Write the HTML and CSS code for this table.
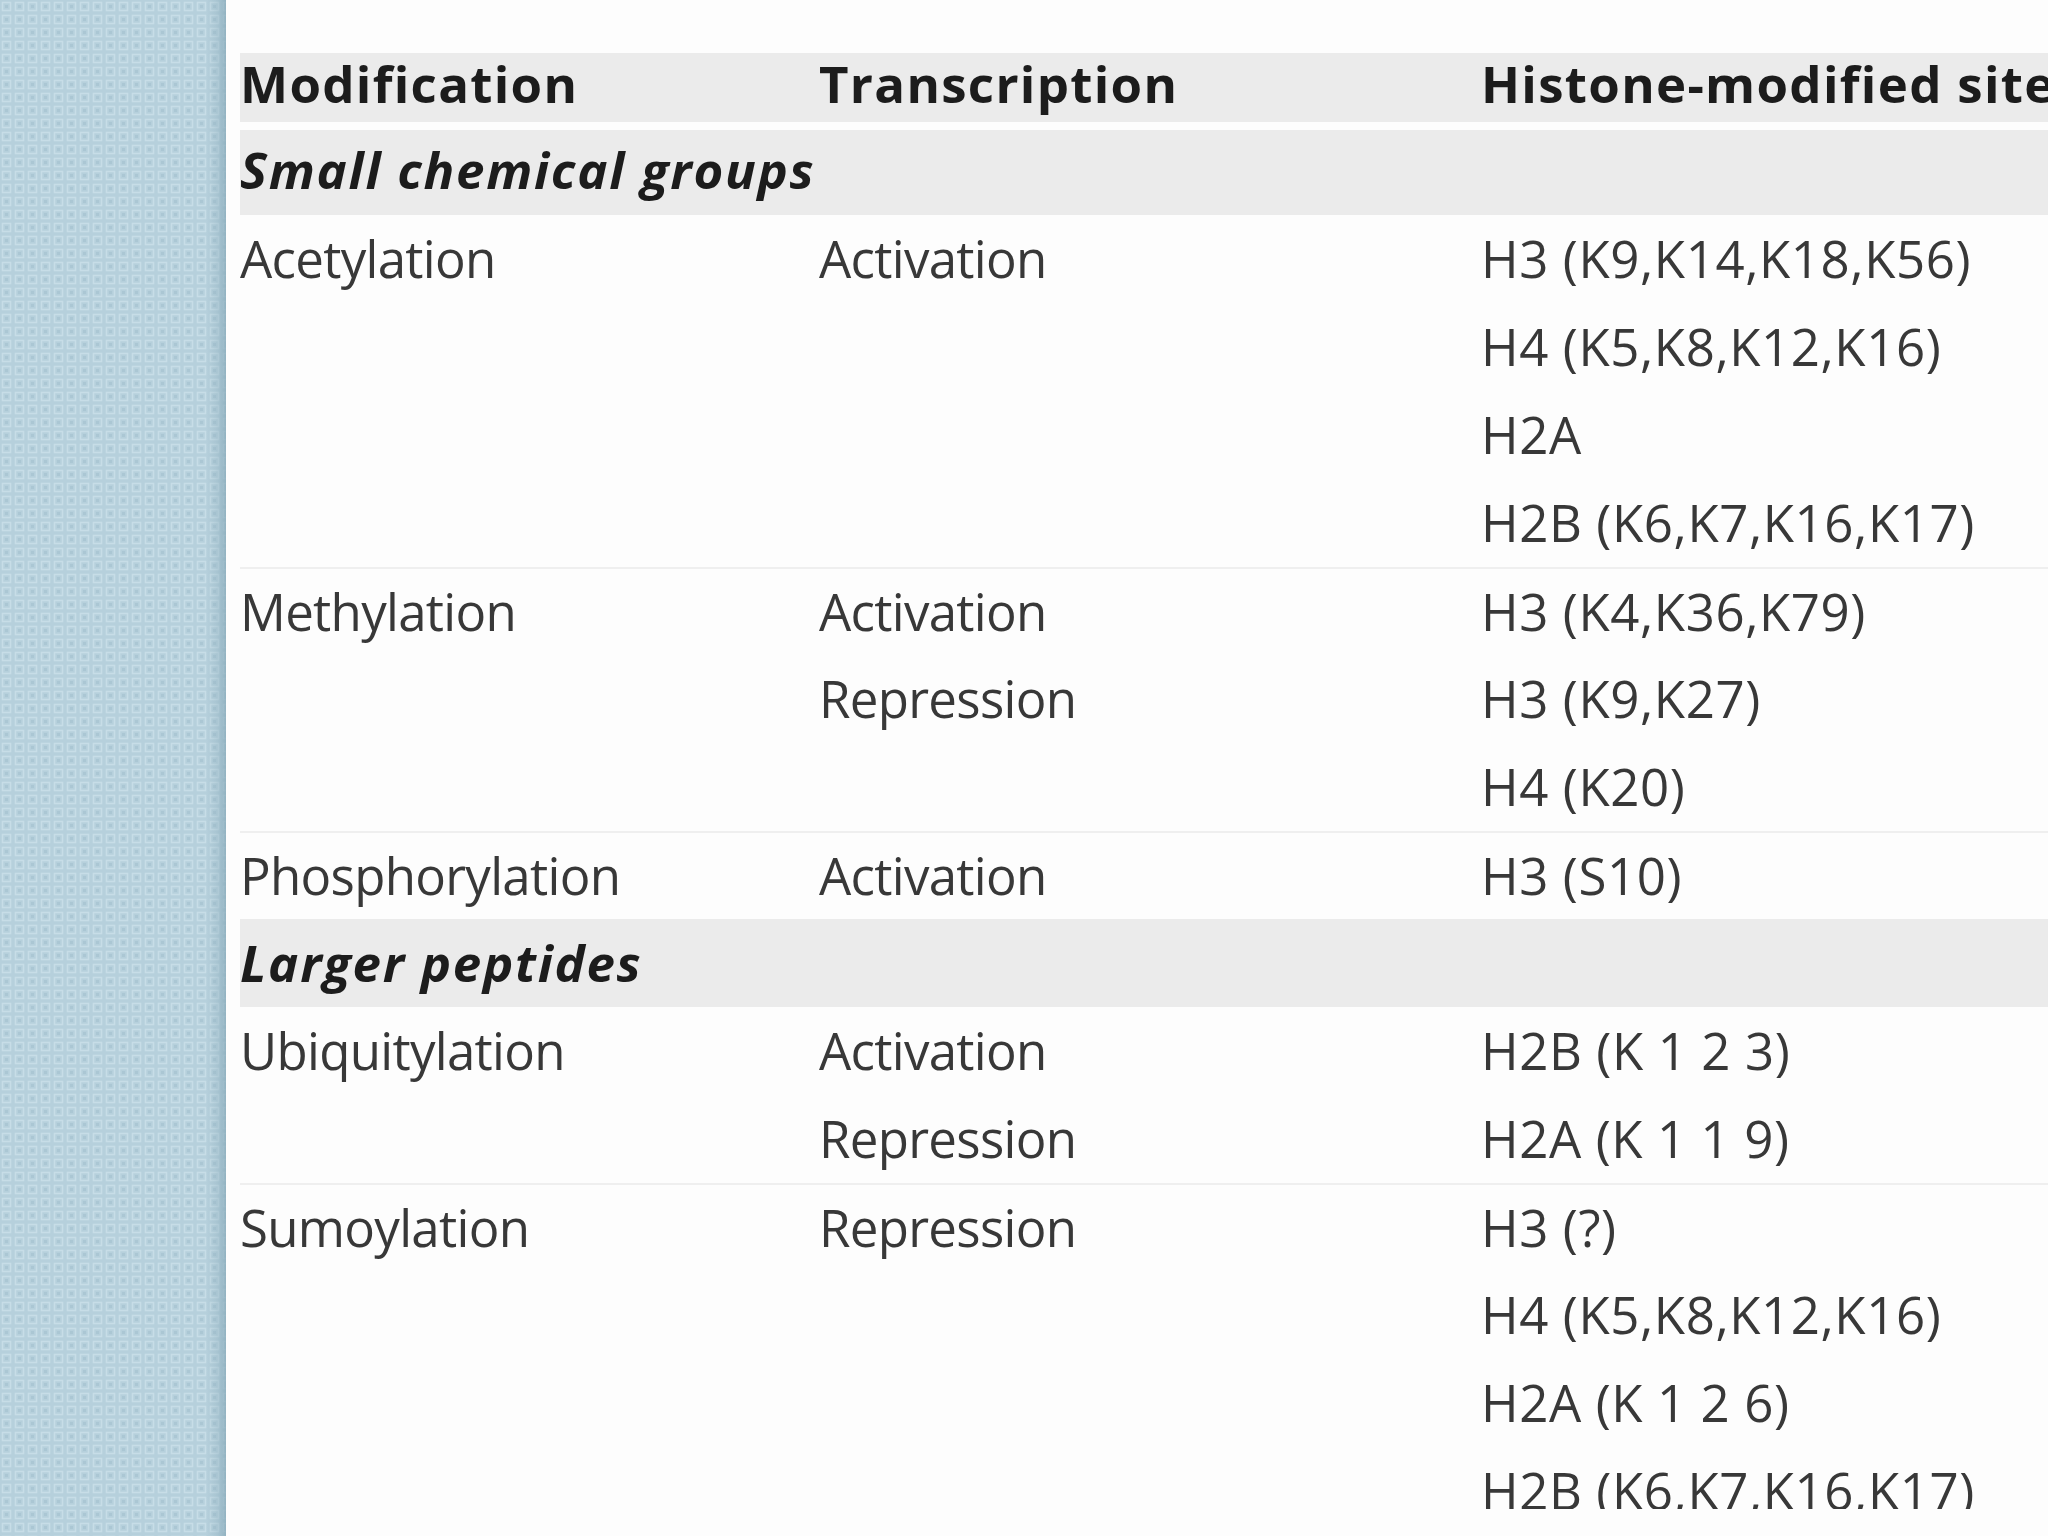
FILE: index.html
```html
<!DOCTYPE html>
<html lang="en">
<head>
<meta charset="utf-8">
<title>Histone modifications</title>
<link rel="stylesheet" href="styles.css">
</head>
<body>
<div class="page">
  <aside class="strip">
    <svg class="strip-art" width="226" height="1536" viewBox="0 0 226 1536" aria-hidden="true">
      <defs>
        <pattern id="dots" width="13" height="13" patternUnits="userSpaceOnUse">
          <rect width="13" height="13" fill="#b6d0dc"/>
          <rect x="2.5" y="2.5" width="8" height="8" fill="none" stroke="#c7dde7" stroke-width="1.6"/>
          <rect x="5" y="5" width="3" height="3" fill="#abc7d4"/>
        </pattern>
        <linearGradient id="edge" x1="0" y1="0" x2="1" y2="0">
          <stop offset="0" stop-color="#8fb0bf" stop-opacity="0"/>
          <stop offset="0.55" stop-color="#8fb0bf" stop-opacity="0.35"/>
          <stop offset="1" stop-color="#86a8b8" stop-opacity="0.75"/>
        </linearGradient>
      </defs>
      <rect width="226" height="1536" fill="url(#dots)"/>
      <rect x="206" width="20" height="1536" fill="url(#edge)"/>
    </svg>
  </aside>
  <main class="main">
    <div class="table">
      <div class="row head">
        <div class="cell">Modification</div>
        <div class="cell">Transcription</div>
        <div class="cell">Histone-modified site</div>
      </div>
      <div class="row band band-first"><div class="cell">Small chemical groups</div></div>

      <div class="group">
        <div class="row"><div class="cell">Acetylation</div><div class="cell">Activation</div><div class="cell site">H3 (K9,K14,K18,K56)</div></div>
        <div class="row"><div class="cell"></div><div class="cell"></div><div class="cell site">H4 (K5,K8,K12,K16)</div></div>
        <div class="row"><div class="cell"></div><div class="cell"></div><div class="cell site">H2A</div></div>
        <div class="row"><div class="cell"></div><div class="cell"></div><div class="cell site">H2B (K6,K7,K16,K17)</div></div>
      </div>

      <div class="group sep">
        <div class="row"><div class="cell">Methylation</div><div class="cell">Activation</div><div class="cell site">H3 (K4,K36,K79)</div></div>
        <div class="row"><div class="cell"></div><div class="cell">Repression</div><div class="cell site">H3 (K9,K27)</div></div>
        <div class="row"><div class="cell"></div><div class="cell"></div><div class="cell site">H4 (K20)</div></div>
      </div>

      <div class="group sep">
        <div class="row"><div class="cell">Phosphorylation</div><div class="cell">Activation</div><div class="cell site">H3 (S10)</div></div>
      </div>

      <div class="row band band-second"><div class="cell">Larger peptides</div></div>

      <div class="group">
        <div class="row"><div class="cell">Ubiquitylation</div><div class="cell">Activation</div><div class="cell site">H2B (K 1 2 3)</div></div>
        <div class="row"><div class="cell"></div><div class="cell">Repression</div><div class="cell site">H2A (K 1 1 9)</div></div>
      </div>

      <div class="group sep">
        <div class="row"><div class="cell">Sumoylation</div><div class="cell">Repression</div><div class="cell site">H3 (?)</div></div>
        <div class="row"><div class="cell"></div><div class="cell"></div><div class="cell site">H4 (K5,K8,K12,K16)</div></div>
        <div class="row"><div class="cell"></div><div class="cell"></div><div class="cell site">H2A (K 1 2 6)</div></div>
        <div class="row"><div class="cell"></div><div class="cell"></div><div class="cell site">H2B (K6,K7,K16,K17)</div></div>
      </div>
    </div>
  </main>
</div>
</body>
</html>
```
FILE: styles.css
```css
html, body {
  margin: 0;
  padding: 0;
  background: #fdfdfd;
  overflow: hidden;
}

.page {
  display: flex;
  width: 2048px;
  height: 1536px;
}

.strip {
  flex: 0 0 226px;
  height: 1536px;
  background: #b6d0dc;
}

.strip-art {
  display: block;
}

.main {
  flex: 1 1 auto;
  min-width: 0;
  height: 1509px;
  overflow: hidden;
  padding: 53px 0 0 14px;
  box-sizing: border-box;
  background: #fdfdfd;
}

.table {
  font-family: "Open Sans", "Noto Sans", "DejaVu Sans", sans-serif;
  font-size: 51px;
  color: #383838;
  letter-spacing: -0.7px;
}

.row {
  display: grid;
  grid-template-columns: 579px 662px 1fr;
  height: 88px;
  align-items: center;
  box-sizing: border-box;
}

.cell {
  white-space: nowrap;
  line-height: 1.2;
}

.site {
  letter-spacing: 0.6px;
}

.head {
  height: 69px;
  margin-bottom: 8px;
  padding-bottom: 10px;
  background: #ebebeb;
  color: #1c1c1c;
  font-weight: 700;
  letter-spacing: 1.3px;
}

.band {
  background: #ebebeb;
  color: #1c1c1c;
  font-weight: 700;
  font-style: italic;
  letter-spacing: 1.7px;
}

.band-first {
  height: 85px;
  padding-bottom: 5px;
}

.band-second {
  height: 88px;
}

.group.sep > .row:first-child {
  border-top: 2px solid #efefef;
}
```
